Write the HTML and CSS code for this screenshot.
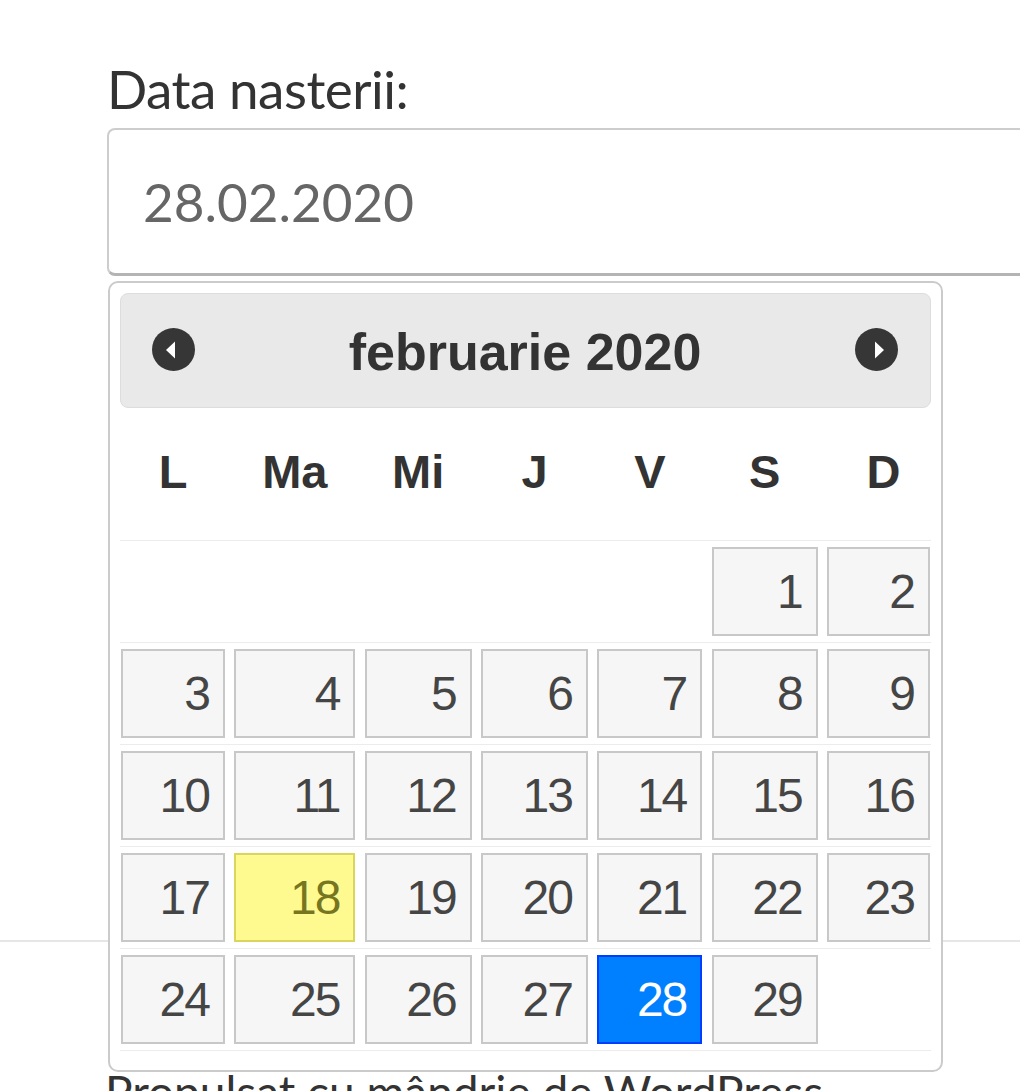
FILE: index.html
```html
<!DOCTYPE html>
<html lang="ro">
<head>
<meta charset="utf-8">
<title>Data nasterii</title>
<link rel="stylesheet" href="styles.css">
</head>
<body>
<div class="page">
  <label class="field-label" for="dob">Data nasterii:</label>
  <input class="date-input" id="dob" type="text" value="28.02.2020">
  <footer class="site-footer"><p>Propulsat cu mândrie de WordPress</p></footer>

  <div class="datepicker">
    <div class="dp-header">
      <span class="dp-nav">
        <svg width="43" height="43" viewBox="0 0 43 43"><circle cx="21.5" cy="21.5" r="21.5" fill="#363636"/><polygon points="14,22 23,13.5 23,30.5" fill="#fff"/></svg>
      </span>
      <span class="dp-title">februarie 2020</span>
      <span class="dp-nav">
        <svg width="43" height="43" viewBox="0 0 43 43"><circle cx="21.5" cy="21.5" r="21.5" fill="#363636"/><polygon points="29,22 20,13.5 20,30.5" fill="#fff"/></svg>
      </span>
    </div>
    <div class="dp-table">
      <div class="dp-row dp-weekdays">
        <span>L</span><span>Ma</span><span>Mi</span><span>J</span><span>V</span><span>S</span><span class="wk-last">D</span>
      </div>
      <div class="dp-row">
        <span></span><span></span><span></span><span></span><span></span>
        <span class="d">1</span><span class="d">2</span>
      </div>
      <div class="dp-row">
        <span class="d">3</span><span class="d">4</span><span class="d">5</span><span class="d">6</span><span class="d">7</span><span class="d">8</span><span class="d">9</span>
      </div>
      <div class="dp-row">
        <span class="d">10</span><span class="d">11</span><span class="d">12</span><span class="d">13</span><span class="d">14</span><span class="d">15</span><span class="d">16</span>
      </div>
      <div class="dp-row">
        <span class="d">17</span><span class="d today">18</span><span class="d">19</span><span class="d">20</span><span class="d">21</span><span class="d">22</span><span class="d">23</span>
      </div>
      <div class="dp-row">
        <span class="d">24</span><span class="d">25</span><span class="d">26</span><span class="d">27</span><span class="d active">28</span><span class="d">29</span><span></span>
      </div>
    </div>
  </div>
</div>
</body>
</html>
```

FILE: styles.css
```css
html, body {
  margin: 0;
  padding: 0;
  background: #fff;
}

.page {
  position: relative;
  width: 1020px;
  height: 1091px;
  overflow: hidden;
  box-sizing: border-box;
  padding: 57px 0 0 107px;
  font-family: Lato, "Open Sans", sans-serif;
  color: #333;
}

.field-label {
  display: block;
  font-size: 53px;
  line-height: 1.2;
  letter-spacing: -0.5px;
  color: #333;
  margin-bottom: 7px;
}

.date-input {
  display: block;
  width: 1000px;
  height: 148px;
  box-sizing: border-box;
  margin: 0;
  border: 2px solid #cdcdcd;
  border-bottom: 3px solid #b4b4b4;
  border-radius: 8px;
  padding: 0 0 0 34px;
  font-family: Lato, "Open Sans", sans-serif;
  font-size: 53px;
  color: #666;
  background: #fff;
  outline: none;
}

.site-footer {
  margin: 664px 0 0 -107px;
  border-top: 2px solid #e6e6e6;
  padding: 122px 0 0 105px;
}

.site-footer p {
  margin: 0;
  font-size: 46px;
  line-height: 1.2;
  color: #333;
  white-space: nowrap;
}

.datepicker {
  position: absolute;
  top: 281px;
  left: 108px;
  width: 835px;
  box-sizing: border-box;
  border: 2px solid #cbcbcb;
  border-radius: 10px;
  padding: 10px 10px 0;
  background: #fff;
  font-family: "Liberation Sans", Arial, sans-serif;
}

.dp-header {
  height: 115px;
  box-sizing: border-box;
  border: 1px solid #dddddd;
  background: #e9e9e9;
  border-radius: 8px;
  display: flex;
  align-items: center;
  justify-content: space-between;
  padding: 0 32px 0 31px;
}

.dp-nav {
  display: flex;
  width: 43px;
  height: 43px;
  margin-top: -3px;
}

.dp-title {
  font-weight: bold;
  font-size: 52px;
  color: #333;
  margin-top: 2px;
}

.dp-table {
  width: 811px;
  margin-bottom: 19px;
}

.dp-row {
  display: grid;
  grid-template-columns: 104px 121px 107px 107px 105px 106px 103px;
  column-gap: 9.33px;
  padding: 6px 1px;
  border-bottom: 1px solid #ececec;
}

.dp-weekdays {
  height: 133px;
  box-sizing: border-box;
  padding: 0 1px 6px;
  align-items: center;
}

.dp-weekdays span {
  text-align: center;
  font-weight: bold;
  font-size: 47px;
  color: #333;
}

.dp-weekdays .wk-last {
  padding-left: 10px;
}

.d {
  height: 89px;
  box-sizing: border-box;
  border: 2px solid #c8c8c8;
  background: #f6f6f6;
  color: #454545;
  font-size: 48px;
  letter-spacing: -2px;
  display: flex;
  align-items: center;
  justify-content: flex-end;
  padding-right: 14px;
}

.d.today {
  background: #fffa90;
  border-color: #dad55e;
  color: #777620;
}

.d.active {
  background: #007fff;
  border-color: #003eff;
  color: #fff;
}
```
